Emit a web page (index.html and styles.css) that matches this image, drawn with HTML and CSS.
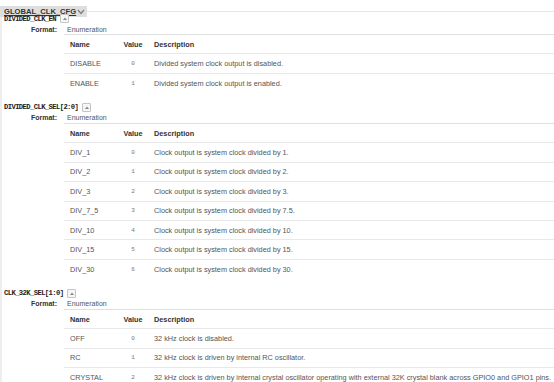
FILE: index.html
```html
<!DOCTYPE html>
<html lang="en">
<head>
    <meta charset="UTF-8">
    <title>GLOBAL_CLK_CFG</title>
    <link rel="stylesheet" href="styles.css">
</head>
<body>
    <div class="reg-head">
        <span class="reg-title">GLOBAL_CLK_CFG<svg class="chevron" width="8" height="6" viewBox="0 0 8 6"><polyline points="1,1 4,4.5 7,1" fill="none" stroke="#7a7f88" stroke-width="1.3"/></svg></span>
    </div>

    <div class="fields">
        <div class="field">
            <div class="field-name"><code>DIVIDED_CLK_EN</code><span class="toggle"><svg width="6" height="5" viewBox="0 0 6 5"><polygon points="1,4 5,4 3,1.5" fill="#888"/></svg></span></div>
            <div class="field-format"><span class="format-label">Format:</span><span class="format-value">Enumeration</span></div>
            <table class="enum">
                <tr><th class="col-name">Name</th><th class="col-value">Value</th><th>Description</th></tr>
                <tr><td>DISABLE</td><td class="col-value">0</td><td>Divided system clock output is disabled.</td></tr>
                <tr><td>ENABLE</td><td class="col-value">1</td><td>Divided system clock output is enabled.</td></tr>
            </table>
        </div>

        <div class="field">
            <div class="field-name"><code>DIVIDED_CLK_SEL[2:0]</code><span class="toggle"><svg width="6" height="5" viewBox="0 0 6 5"><polygon points="1,4 5,4 3,1.5" fill="#888"/></svg></span></div>
            <div class="field-format"><span class="format-label">Format:</span><span class="format-value">Enumeration</span></div>
            <table class="enum">
                <tr><th class="col-name">Name</th><th class="col-value">Value</th><th>Description</th></tr>
                <tr><td>DIV_1</td><td class="col-value">0</td><td>Clock output is system clock divided by 1.</td></tr>
                <tr><td>DIV_2</td><td class="col-value">1</td><td>Clock output is system clock divided by 2.</td></tr>
                <tr><td>DIV_3</td><td class="col-value">2</td><td>Clock output is system clock divided by 3.</td></tr>
                <tr><td>DIV_7_5</td><td class="col-value">3</td><td>Clock output is system clock divided by 7.5.</td></tr>
                <tr><td>DIV_10</td><td class="col-value">4</td><td>Clock output is system clock divided by 10.</td></tr>
                <tr><td>DIV_15</td><td class="col-value">5</td><td>Clock output is system clock divided by 15.</td></tr>
                <tr><td>DIV_30</td><td class="col-value">6</td><td>Clock output is system clock divided by 30.</td></tr>
            </table>
        </div>

        <div class="field">
            <div class="field-name"><code>CLK_32K_SEL[1:0]</code><span class="toggle"><svg width="6" height="5" viewBox="0 0 6 5"><polygon points="1,4 5,4 3,1.5" fill="#888"/></svg></span></div>
            <div class="field-format"><span class="format-label">Format:</span><span class="format-value">Enumeration</span></div>
            <table class="enum">
                <tr><th class="col-name">Name</th><th class="col-value">Value</th><th>Description</th></tr>
                <tr><td>OFF</td><td class="col-value">0</td><td>32 kHz clock is disabled.</td></tr>
                <tr><td>RC</td><td class="col-value">1</td><td>32 kHz clock is driven by internal RC oscillator.</td></tr>
                <tr><td>CRYSTAL</td><td class="col-value">2</td><td>32 kHz clock is driven by internal crystal oscillator operating with external 32K crystal blank across GPIO0 and GPIO1 pins.</td></tr>
            </table>
        </div>
    </div>
</body>
</html>
```

FILE: styles.css
```css
body {
    margin: 0;
    font-family: "Liberation Sans", Arial, sans-serif;
    color: #555;
    background: #fff;
    overflow: hidden;
}
.reg-head {
    border-bottom: 1px solid #e6e6e6;
    height: 11px;
}
.reg-title {
    display: inline-flex;
    align-items: center;
    gap: 1px;
    height: 11px;
    padding: 0 2px 0 4px;
    background-color: #dedede;
    color: #333;
    font-weight: bold;
    font-size: 7.6px;
    text-decoration: underline;
}
.chevron {
    margin-top: 1px;
}
.fields {
    border-left: 2px solid #eeeeee;
    padding-bottom: 20px;
}
.field {
    padding-top: 1px;
}
.field + .field {
    margin-top: 8.5px;
}
.field-name {
    display: flex;
    align-items: center;
    height: 11px;
    padding-left: 2px;
}
.field-name code {
    font-family: "Liberation Mono", "Courier New", monospace;
    font-weight: bold;
    font-size: 7.2px;
    letter-spacing: -0.6px;
    color: #222;
}
.toggle {
    display: inline-flex;
    align-items: center;
    justify-content: center;
    width: 7px;
    height: 7px;
    margin-left: 4px;
    border: 1px solid #c4c4c4;
    border-radius: 1px;
    background-color: #f6f6f6;
}
.field-format {
    display: flex;
    align-items: center;
    height: 10px;
    font-size: 7px;
}
.format-label {
    width: 55px;
    text-align: right;
    font-weight: bold;
    color: #333;
}
.format-value {
    margin-left: 10px;
}
.enum {
    margin-left: 62px;
    width: calc(100% - 62px);
    border-collapse: collapse;
    font-size: 7.3px;
}
.enum th, .enum td {
    height: 18.45px;
    padding: 0 0 0 6px;
    border-top: 1px solid #e8e8e8;
    text-align: left;
    white-space: nowrap;
}
.enum tr:first-child th {
    border-top-color: #e0e0e0;
}
.enum th {
    color: #333;
    font-weight: bold;
}
.enum .col-name {
    width: 48px;
}
.enum .col-value {
    width: 30px;
    padding: 0;
    text-align: center;
}
.enum td.col-value {
    font-family: "Liberation Mono", monospace;
    font-size: 6px;
    color: #777;
}
```
